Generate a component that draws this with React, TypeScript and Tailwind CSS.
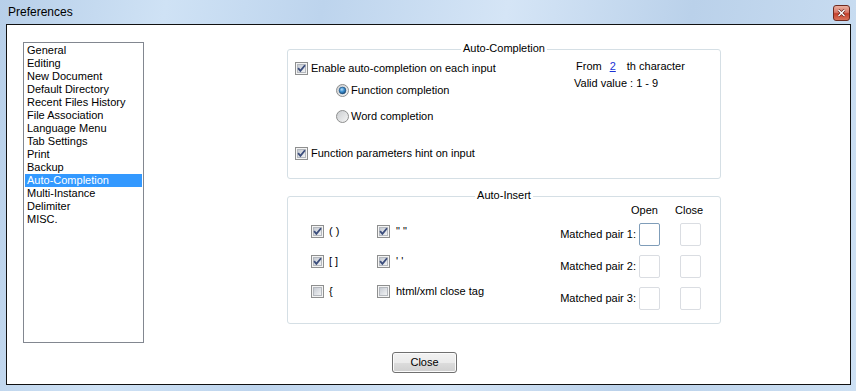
import React from "react";

const Check = ({ checked }: { checked: boolean }) => (
  <svg width="13" height="13" viewBox="0 0 13 13" className="shrink-0">
    <defs>
      <linearGradient id="cbg" x1="0" y1="0" x2="1" y2="1">
        <stop offset="0" stopColor="#c3c8d0" />
        <stop offset="1" stopColor="#f4f5f6" />
      </linearGradient>
    </defs>
    <rect x="0.5" y="0.5" width="12" height="12" fill="#f4f4f4" stroke="#8e8f8f" />
    <rect x="2.5" y="2.5" width="8" height="8" fill="url(#cbg)" stroke="#b4b8be" />
    {checked && (
      <path d="M3.1 6.2 L5.4 8.9 L10 3.2" fill="none" stroke="#3b4d7c" strokeWidth="1.8" />
    )}
  </svg>
);

const Radio = ({ checked }: { checked: boolean }) => (
  <svg width="13" height="13" viewBox="0 0 13 13" className="shrink-0">
    <defs>
      <linearGradient id="rbg" x1="0" y1="0" x2="1" y2="1">
        <stop offset="0" stopColor="#c9cccf" />
        <stop offset="1" stopColor="#f6f6f6" />
      </linearGradient>
      <radialGradient id="rdot" cx="0.4" cy="0.35" r="0.75">
        <stop offset="0" stopColor="#b6dcf7" />
        <stop offset="0.45" stopColor="#3b8fd1" />
        <stop offset="1" stopColor="#123d66" />
      </radialGradient>
    </defs>
    <circle cx="6.5" cy="6.5" r="6" fill="url(#rbg)" stroke="#8e8f8f" />
    {checked && <circle cx="6.5" cy="6.5" r="3.4" fill="url(#rdot)" stroke="#1d4a76" strokeWidth="0.6" />}
  </svg>
);

const items = [
  "General",
  "Editing",
  "New Document",
  "Default Directory",
  "Recent Files History",
  "File Association",
  "Language Menu",
  "Tab Settings",
  "Print",
  "Backup",
  "Auto-Completion",
  "Multi-Instance",
  "Delimiter",
  "MISC.",
];

export default function App() {
  return (
    <div className="w-[856px] h-[391px] flex flex-col overflow-hidden bg-[linear-gradient(100deg,#b7cfe9_0%,#cfe2f5_18%,#bdd4ed_35%,#d5e5f6_55%,#bad1ea_75%,#cde0f3_100%)] font-['Liberation_Sans',Arial,sans-serif] text-[11px] text-black">
      {/* Title bar */}
      <div className="h-[24px] flex items-center pl-[8px] pr-[6px]">
        <span className="text-[12px] leading-[14px] text-black">Preferences</span>
        <div className="ml-auto w-[17px] h-[16px] mt-[2px] rounded-[3px] border border-[#6e2a20] bg-[linear-gradient(180deg,#eab0a0_0%,#d8796a_45%,#c4402c_55%,#d9735a_100%)] flex items-center justify-center">
          <svg width="9" height="8" viewBox="0 0 9 8">
            <path d="M1.5 1 L7.5 7 M7.5 1 L1.5 7" stroke="#5a1b12" strokeWidth="2.6" />
            <path d="M1.5 1 L7.5 7 M7.5 1 L1.5 7" stroke="#ffffff" strokeWidth="1.5" />
          </svg>
        </div>
      </div>

      {/* Client area */}
      <div className="ml-[6px] w-[845px] h-[361px] border border-[#111] bg-white flex flex-col">
        <div className="flex items-start h-[318px] pt-[17px] pl-[16px]">
          {/* List box */}
          <div className="w-[121px] h-[301px] border border-[#828790] bg-white pt-[1px] px-[1px]">
            {items.map((it) => (
              <div
                key={it}
                className={
                  it === "Auto-Completion"
                    ? "h-[13px] leading-[13px] pl-[2px] bg-[#3399ff] text-white whitespace-nowrap"
                    : "h-[13px] leading-[13px] pl-[2px] whitespace-nowrap"
                }
              >
                {it}
              </div>
            ))}
          </div>

          {/* Groups */}
          <div className="ml-[143px] mt-[7px] flex flex-col">
            {/* Auto-Completion */}
            <div className="relative w-[434px] h-[130px] border border-[#d5dfe5] rounded-[3px] flex">
              <span className="absolute left-1/2 -translate-x-1/2 top-[-8px] bg-white px-[2px] leading-[13px] whitespace-nowrap">
                Auto-Completion
              </span>
              <div className="w-[286px] pl-[7px] pt-[12px] flex flex-col">
                <div className="flex items-center h-[13px] gap-[3px] whitespace-nowrap">
                  <Check checked />
                  <span>Enable auto-completion on each input</span>
                </div>
                <div className="flex items-center h-[13px] gap-[2px] ml-[41px] mt-[9px] whitespace-nowrap">
                  <Radio checked />
                  <span>Function completion</span>
                </div>
                <div className="flex items-center h-[13px] gap-[2px] ml-[41px] mt-[13px] whitespace-nowrap">
                  <Radio checked={false} />
                  <span>Word completion</span>
                </div>
                <div className="flex items-center h-[13px] gap-[3px] mt-[24px] whitespace-nowrap">
                  <Check checked />
                  <span>Function parameters hint on input</span>
                </div>
              </div>
              <div className="pt-[10px] flex flex-col">
                <div className="flex h-[13px] leading-[13px] pl-[2px] whitespace-nowrap">
                  <span>From</span>
                  <span className="ml-[8px] text-[#1a33d6] underline">2</span>
                  <span className="ml-[11px]">th character</span>
                </div>
                <div className="h-[13px] leading-[13px] mt-[4px] whitespace-nowrap">Valid value : 1 - 9</div>
              </div>
            </div>

            {/* Auto-Insert */}
            <div className="relative mt-[17px] w-[434px] h-[128px] border border-[#d5dfe5] rounded-[3px] flex">
              <span className="absolute left-1/2 -translate-x-1/2 top-[-8px] bg-white px-[2px] leading-[13px] whitespace-nowrap">
                Auto-Insert
              </span>
              <div className="w-[271px] pl-[23px] pt-[28px]">
                <div className="grid grid-cols-[66px_auto] gap-y-[17px]">
                  <div className="flex items-center h-[13px] gap-[5px]"><Check checked /><span>( )</span></div>
                  <div className="flex items-center h-[13px] gap-[6px]"><Check checked /><span>" "</span></div>
                  <div className="flex items-center h-[13px] gap-[5px]"><Check checked /><span>[ ]</span></div>
                  <div className="flex items-center h-[13px] gap-[6px]"><Check checked /><span>' '</span></div>
                  <div className="flex items-center h-[13px] gap-[5px]"><Check checked={false} /><span>{"{"}</span></div>
                  <div className="flex items-center h-[13px] gap-[6px] whitespace-nowrap"><Check checked={false} /><span>html/xml close tag</span></div>
                </div>
              </div>
              <div className="pt-[7px] flex flex-col">
                <div className="flex h-[13px] leading-[13px] pl-[72px]">
                  <span className="w-[44px]">Open</span>
                  <span>Close</span>
                </div>
                <div className="mt-[6px] flex flex-col gap-y-[9px]">
                  {[1, 2, 3].map((n) => (
                    <div key={n} className="flex items-center h-[23px]">
                      <span className="w-[77px] text-right whitespace-nowrap">Matched pair {n}:</span>
                      <div
                        className={
                          n === 1
                            ? "ml-[3px] w-[21px] h-[23px] border border-[#7f9db9] rounded-[2px] bg-white"
                            : "ml-[3px] w-[21px] h-[23px] border border-[#dadde2] rounded-[2px] bg-white"
                        }
                      />
                      <div className="ml-[20px] w-[21px] h-[23px] border border-[#dadde2] rounded-[2px] bg-white" />
                    </div>
                  ))}
                </div>
              </div>
            </div>
          </div>
        </div>

        {/* Close button */}
        <div className="ml-[385px] mt-[9px]">
          <button className="w-[65px] h-[21px] border border-[#707070] rounded-[3px] bg-[linear-gradient(180deg,#f2f2f2_0%,#ebebeb_50%,#dddddd_50%,#cfcfcf_100%)] shadow-[inset_0_0_0_1px_#fbfbfb] text-[11px] leading-[13px] text-black">
            Close
          </button>
        </div>
      </div>
    </div>
  );
}
